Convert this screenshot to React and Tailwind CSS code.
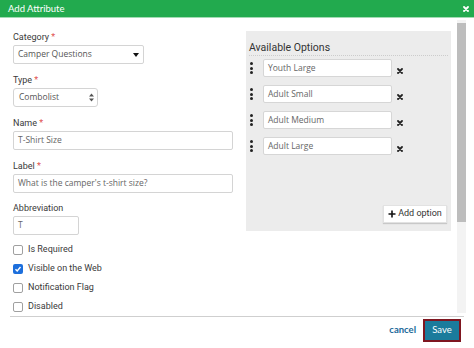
import React from "react";

const options = ["Youth Large", "Adult Small", "Adult Medium", "Adult Large"];

const checks = [
  { label: "Is Required", checked: false },
  { label: "Visible on the Web", checked: true },
  { label: "Notification Flag", checked: false },
  { label: "Disabled", checked: false },
];

function Label({ text, required }) {
  return (
    <div className="h-[12px] mb-[2px] leading-[12px] text-[9px] text-[#3a3a3a] font-['Roboto',sans-serif]">
      {text}
      {required && <span className="text-[#e0534f]"> *</span>}
    </div>
  );
}

function TextBox({ value, width }) {
  return (
    <div
      className={`${width} h-[19px] border border-[#d4d4d4] rounded-[2px] bg-white flex items-center pl-[4px] text-[8.5px] text-[#666] font-['Open_Sans',sans-serif]`}
    >
      {value}
    </div>
  );
}

function Cross({ color = "#222", size = 6 }) {
  return (
    <svg width={size} height={size} viewBox="0 0 6 6">
      <path d="M1 1 L5 5 M5 1 L1 5" stroke={color} strokeWidth="1.8" strokeLinecap="round" />
    </svg>
  );
}

export default function App() {
  return (
    <div className="w-[474px] h-[348px] bg-white flex flex-col overflow-hidden font-['Roboto',sans-serif]">
      {/* header */}
      <div className="h-[18px] bg-[#22aa4e] border-b border-[#a3dbb4] flex items-center justify-between pl-[8px] pr-[5px]">
        <span className="text-[9.5px] text-white font-['Lato',sans-serif] leading-none">Add Attribute</span>
        <Cross color="#fff" size={6} />
      </div>

      {/* body */}
      <div className="h-[298px] flex">
        <div className="w-[455px] flex pl-[13px] pt-[13px]">
          {/* left column */}
          <div className="w-[233px] flex flex-col">
            <Label text="Category" required />
            <div className="w-[131px] h-[19px] mb-[10px] border border-[#d4d4d4] rounded-[2px] bg-white flex items-center justify-between pl-[4px] pr-[4px] text-[8.5px] text-[#555] font-['Open_Sans',sans-serif]">
              <span>Camper Questions</span>
              <svg width="6" height="4" viewBox="0 0 6 4">
                <path d="M0 0 L6 0 L3 4 Z" fill="#111" />
              </svg>
            </div>

            <Label text="Type" required />
            <div className="w-[85px] h-[19px] mb-[10px] border border-[#d4d4d4] rounded-[3px] bg-white flex items-center justify-between pl-[5px] pr-[3px] text-[8.5px] text-[#555] font-['Open_Sans',sans-serif]">
              <span>Combolist</span>
              <svg width="5" height="9" viewBox="0 0 5 9">
                <path d="M0 3.5 L2.5 0.5 L5 3.5 Z M0 5.5 L2.5 8.5 L5 5.5 Z" fill="#555" />
              </svg>
            </div>

            <Label text="Name" required />
            <div className="mb-[10px]">
              <TextBox value="T-Shirt Size" width="w-[220px]" />
            </div>

            <Label text="Label" required />
            <div className="mb-[9px]">
              <TextBox value="What is the camper's t-shirt size?" width="w-[220px]" />
            </div>

            <Label text="Abbreviation" />
            <TextBox value="T" width="w-[66px]" />

            <div className="mt-[5px] flex flex-col">
              {checks.map((c) => (
                <div key={c.label} className="h-[19px] flex items-center gap-[5px]">
                  {c.checked ? (
                    <div className="w-[10px] h-[10px] rounded-[2px] bg-[#1d6fdc] flex items-center justify-center">
                      <svg width="8" height="8" viewBox="0 0 8 8">
                        <path d="M1.5 4.2 L3.2 6 L6.5 2" stroke="#fff" strokeWidth="1.4" fill="none" />
                      </svg>
                    </div>
                  ) : (
                    <div className="w-[10px] h-[10px] rounded-[2px] border border-[#a0a0a0] bg-white" />
                  )}
                  <span className="text-[9px] text-[#3a3a3a]">{c.label}</span>
                </div>
              ))}
            </div>
          </div>

          {/* options panel */}
          <div className="w-[205px] h-[200px] bg-[#ececec] flex flex-col">
            <div className="mx-[3px] mt-[10px] pb-[1px] border-b border-dotted border-[#cccccc] text-[10.5px] leading-[13px] text-[#333]">
              Available Options
            </div>
            <div className="mt-[3px] flex flex-col gap-[8px]">
              {options.map((o) => (
                <div key={o} className="flex items-start pl-[4px]">
                  <div className="mt-[3px] flex flex-col gap-[1.5px]">
                    <div className="w-[3px] h-[3px] rounded-full bg-[#222]" />
                    <div className="w-[3px] h-[3px] rounded-full bg-[#222]" />
                    <div className="w-[3px] h-[3px] rounded-full bg-[#222]" />
                  </div>
                  <div className="ml-[10px] w-[129px] h-[18px] border border-[#d6d6d6] rounded-[2px] bg-white flex items-center pl-[4px] text-[8.5px] text-[#666] font-['Open_Sans',sans-serif]">
                    {o}
                  </div>
                  <div className="ml-[5px] mt-[9px]">
                    <Cross />
                  </div>
                </div>
              ))}
            </div>
            <div className="mt-auto mb-[8px] mr-[4px] self-end w-[64px] h-[18px] bg-white border border-[#e2e2e2] shadow-[0_1px_1px_rgba(0,0,0,0.15)] flex items-center justify-center gap-[2px] text-[9px] text-[#333]">
              <svg width="8" height="8" viewBox="0 0 8 8">
                <path d="M4 0.5 V7.5 M0.5 4 H7.5" stroke="#111" strokeWidth="1.6" />
              </svg>
              <span>Add option</span>
            </div>
          </div>
        </div>

        {/* scrollbar */}
        <div className="ml-[2px] mt-[2px] w-[9px] h-[293px] bg-[#f3f3f3] pt-[3px]">
          <div className="w-[9px] h-[199px] bg-[#bdbdbd]" />
        </div>
      </div>

      {/* footer */}
      <div className="mx-[10px] border-t border-[#cfcfcf] pt-[2px] flex justify-end items-center gap-[7px] pr-[3px]">
        <span className="text-[9.5px] font-bold text-[#20699a] font-['Lato',sans-serif]">cancel</span>
        <div className="w-[38px] h-[23px] bg-[#1b7b9c] border-2 border-[#7f1620] flex items-center justify-center text-[9.5px] text-white font-['Lato',sans-serif]">
          Save
        </div>
      </div>
    </div>
  );
}
